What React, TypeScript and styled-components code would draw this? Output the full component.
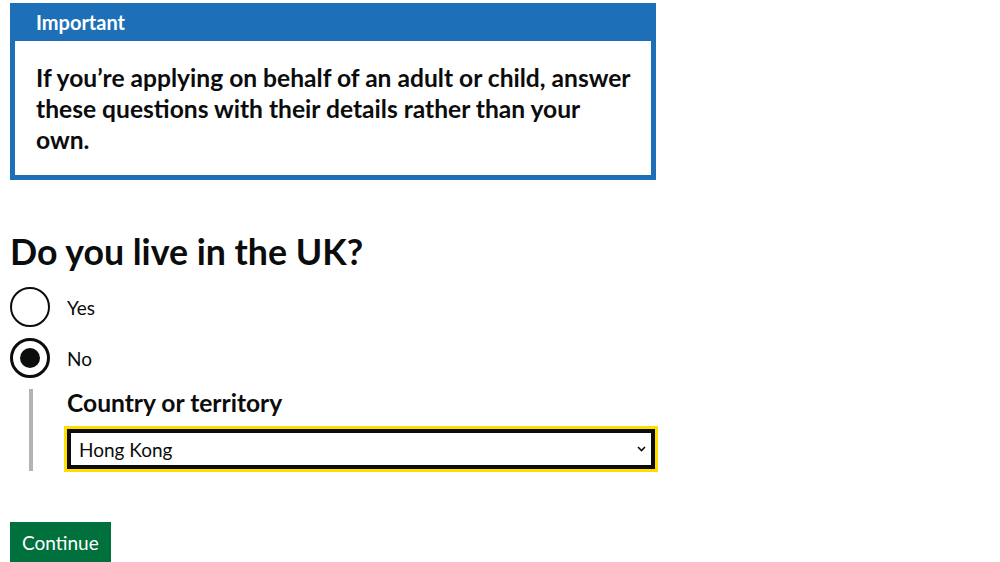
import React, { useState } from 'react';
import styled, { createGlobalStyle } from 'styled-components';

const GlobalStyle = createGlobalStyle`
  html, body {
    margin: 0;
    padding: 0;
    background: #ffffff;
  }
  body {
    font-family: Lato, "Liberation Sans", Arial, sans-serif;
    color: #0b0c0c;
  }
`;

const Page = styled.main`
  width: 1000px;
  height: 562px;
  overflow: hidden;
  padding: 3px 0 0 10px;
  box-sizing: border-box;
  display: flex;
  flex-direction: column;
`;

const Banner = styled.section`
  width: 646px;
  box-sizing: border-box;
  border: 5px solid #1d70b8;
  border-top: 0;
  background: #1d70b8;
`;

const BannerHeader = styled.h2`
  margin: 0;
  height: 38px;
  padding: 0 0 0 21px;
  display: flex;
  align-items: center;
  color: #ffffff;
  font-size: 20px;
  font-weight: 700;
`;

const BannerBody = styled.div`
  background: #ffffff;
  padding: 21px 20px 20px 21px;
`;

const BannerText = styled.p`
  margin: 0;
  font-size: 24.6px;
  line-height: 31px;
  font-weight: 700;
`;

const Fieldset = styled.fieldset`
  margin: 52px 0 0 0;
  padding: 0;
  border: 0;
  display: flex;
  flex-direction: column;
`;

const Legend = styled.legend`
  padding: 0;
  margin: 0 0 15px 0;
  font-size: 35.7px;
  line-height: 40px;
  font-weight: 700;
`;

const RadioRow = styled.label`
  display: flex;
  align-items: center;
  gap: 17px;
  height: 40px;
  margin-bottom: 11px;
  cursor: pointer;
  font-size: 19px;
`;

const RadioCircle = styled.span<{ $checked: boolean }>`
  width: 40px;
  height: 40px;
  box-sizing: border-box;
  border-radius: 50%;
  border: ${p => (p.$checked ? '3px' : '2px')} solid #0b0c0c;
  display: flex;
  align-items: center;
  justify-content: center;
  &::after {
    content: '';
    width: 20px;
    height: 20px;
    border-radius: 50%;
    background: #0b0c0c;
    display: ${p => (p.$checked ? 'block' : 'none')};
  }
`;

const HiddenInput = styled.input`
  position: absolute;
  opacity: 0;
  width: 0;
  height: 0;
`;

const Conditional = styled.div`
  margin: 0 0 0 19px;
  padding: 0 0 0 33px;
  border-left: 4px solid #b1b4b6;
  display: flex;
  flex-direction: column;
`;

const FieldLabel = styled.label`
  font-size: 24.6px;
  line-height: 28px;
  font-weight: 700;
  margin: 0 0 12px 0;
  padding-left: 1px;
`;

const SelectWrap = styled.div`
  position: relative;
  width: 588px;
  height: 40px;
  margin-left: 1px;
  margin-bottom: 2px;
`;

const Select = styled.select`
  appearance: none;
  width: 100%;
  height: 100%;
  box-sizing: border-box;
  padding: 0 30px 0 8px;
  font-family: Lato, "Liberation Sans", Arial, sans-serif;
  font-size: 19px;
  color: #0b0c0c;
  background: #ffffff;
  border: 4px solid #0b0c0c;
  border-radius: 0;
  outline: 3px solid #ffdd00;
  outline-offset: 0;
`;

const Chevron = styled.svg`
  position: absolute;
  right: 9px;
  top: 17px;
  pointer-events: none;
`;

const Button = styled.button`
  margin-top: 51px;
  align-self: flex-start;
  background: #00703c;
  color: #ffffff;
  border: 0;
  border-radius: 0;
  font-family: Lato, "Liberation Sans", Arial, sans-serif;
  font-size: 19px;
  line-height: 25px;
  padding: 8px 12px 7px 12px;
  box-shadow: 0 2px 0 #002d18;
  cursor: pointer;
`;

export default function App() {
  const [lives, setLives] = useState<'yes' | 'no'>('no');
  const [country, setCountry] = useState('Hong Kong');

  return (
    <>
      <GlobalStyle />
      <Page>
        <Banner>
          <BannerHeader>Important</BannerHeader>
          <BannerBody>
            <BannerText>
              If you’re applying on behalf of an adult or child, answer these questions with their details rather than your own.
            </BannerText>
          </BannerBody>
        </Banner>

        <Fieldset>
          <Legend>Do you live in the UK?</Legend>
          <RadioRow>
            <HiddenInput type="radio" name="lives" checked={lives === 'yes'} onChange={() => setLives('yes')} />
            <RadioCircle $checked={lives === 'yes'} />
            Yes
          </RadioRow>
          <RadioRow>
            <HiddenInput type="radio" name="lives" checked={lives === 'no'} onChange={() => setLives('no')} />
            <RadioCircle $checked={lives === 'no'} />
            No
          </RadioRow>
          {lives === 'no' && (
            <Conditional>
              <FieldLabel htmlFor="country">Country or territory</FieldLabel>
              <SelectWrap>
                <Select id="country" value={country} onChange={e => setCountry(e.target.value)}>
                  <option>France</option>
                  <option>Hong Kong</option>
                  <option>India</option>
                  <option>United States</option>
                </Select>
                <Chevron width="9" height="6" viewBox="0 0 9 6">
                  <path d="M1 1 L4.5 4.5 L8 1" fill="none" stroke="#0b0c0c" strokeWidth="1.6" />
                </Chevron>
              </SelectWrap>
            </Conditional>
          )}
        </Fieldset>

        <Button type="button">Continue</Button>
      </Page>
    </>
  );
}
